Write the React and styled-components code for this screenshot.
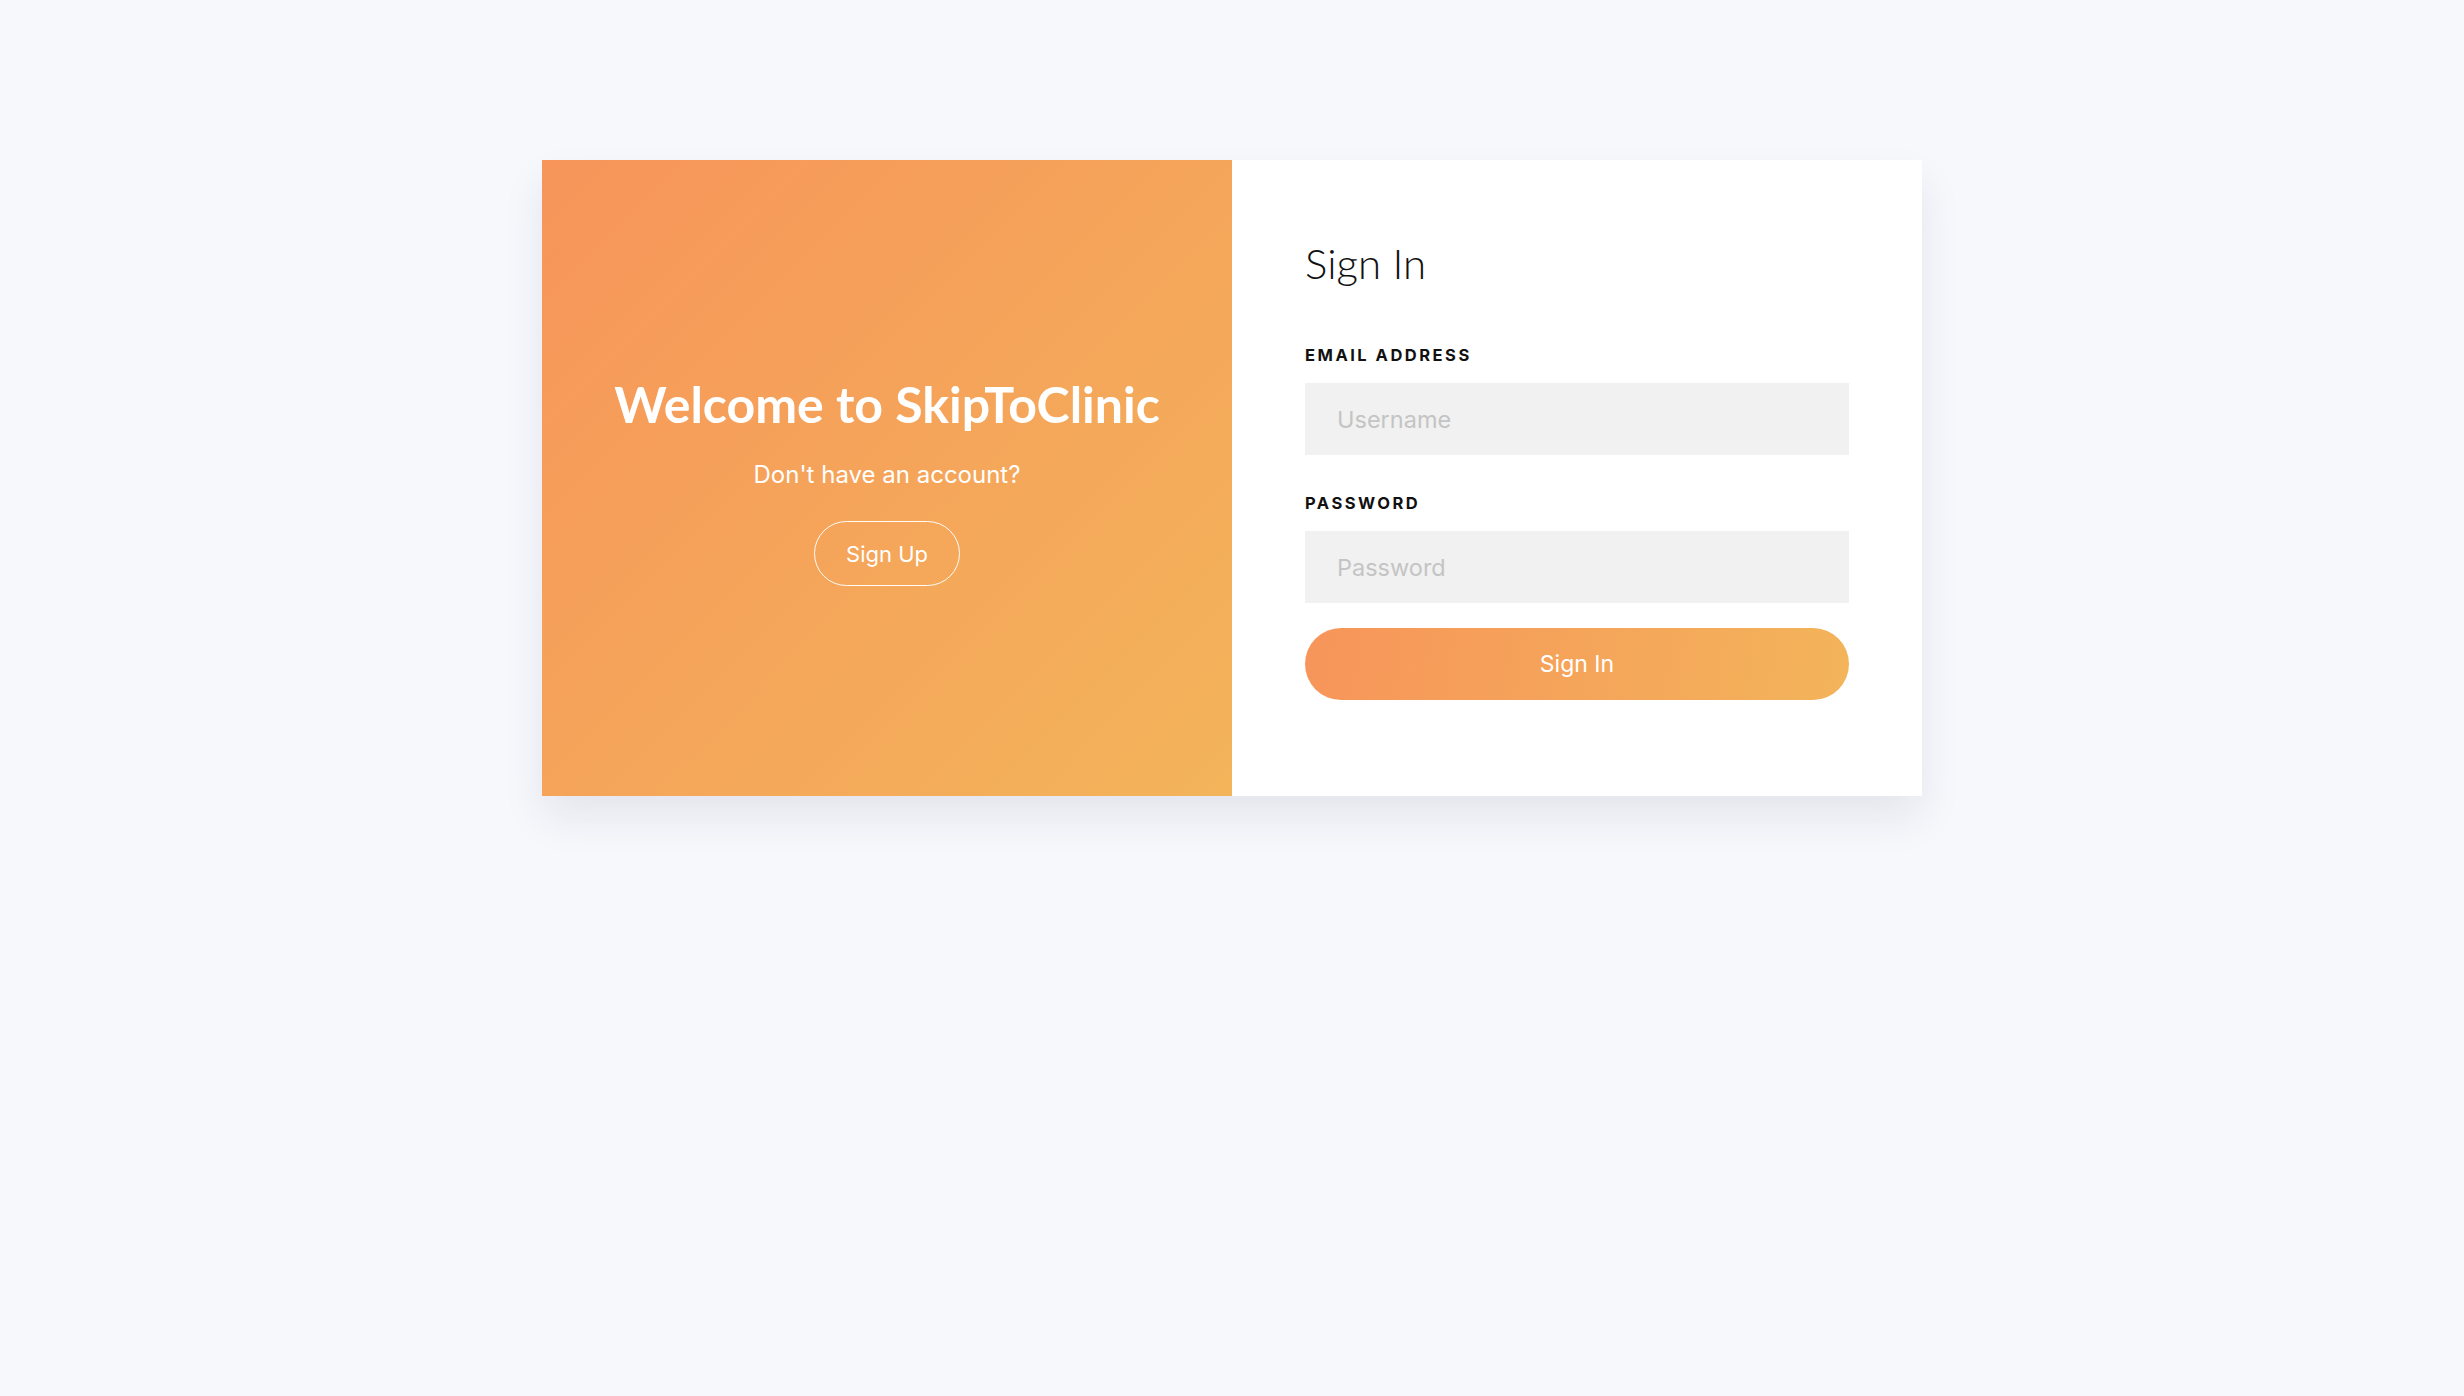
import styled, { createGlobalStyle } from "styled-components";

const GlobalStyle = createGlobalStyle`
    * {
        box-sizing: border-box;
    }
    body {
        margin: 0;
        background: #f7f8fc;
        font-family: Inter, "Noto Sans", sans-serif;
    }
`

const App = () => {
    return (
        <>
            <GlobalStyle />
            <Page>
                <Card>
                    <WelcomePanel>
                        <WelcomeTitle>Welcome to SkipToClinic</WelcomeTitle>
                        <WelcomeText>Don't have an account?</WelcomeText>
                        <OutlineButton type="button">Sign Up</OutlineButton>
                    </WelcomePanel>
                    <FormPanel>
                        <FormTitle>Sign In</FormTitle>
                        <Field>
                            <FieldLabel htmlFor="email">Email Address</FieldLabel>
                            <TextInput id="email" type="text" placeholder="Username" />
                        </Field>
                        <Field>
                            <FieldLabel htmlFor="password">Password</FieldLabel>
                            <TextInput id="password" type="password" placeholder="Password" />
                        </Field>
                        <SubmitButton type="button">Sign In</SubmitButton>
                    </FormPanel>
                </Card>
            </Page>
        </>
    );
};

export default App;

const Page = styled.div`
    min-height: 100vh;
    display: flex;
    justify-content: center;
    align-items: flex-start;
    padding-top: 160px;
`

const Card = styled.div`
    width: 1380px;
    min-height: 636px;
    display: grid;
    grid-template-columns: 1fr 1fr;
    background: #ffffff;
    box-shadow: 0 22px 40px rgba(20, 30, 60, 0.08);
`

const WelcomePanel = styled.div`
    display: flex;
    flex-direction: column;
    align-items: center;
    justify-content: center;
    padding-top: 4px;
    background: linear-gradient(135deg, #f7955a 0%, #f3b45a 100%);
    color: #ffffff;
`

const WelcomeTitle = styled.h1`
    margin: 0 0 26px;
    font-family: Lato, "Liberation Sans", sans-serif;
    font-size: 50px;
    font-weight: 700;
    line-height: 1.2;
`

const WelcomeText = styled.p`
    margin: 0 0 32px;
    font-size: 24px;
    line-height: 1.21;
`

const OutlineButton = styled.button`
    height: 65px;
    padding: 0 31px;
    border: 1px solid rgba(255, 255, 255, 0.95);
    border-radius: 33px;
    background: transparent;
    color: #ffffff;
    font-family: Inter, "Noto Sans", sans-serif;
    font-size: 22px;
    cursor: pointer;
`

const FormPanel = styled.div`
    display: flex;
    flex-direction: column;
    padding: 79px 73px 96px;
`

const FormTitle = styled.h2`
    margin: 0 0 58px;
    font-family: Lato, "Liberation Sans", sans-serif;
    font-size: 42px;
    font-weight: 300;
    line-height: 48px;
    color: #111111;
`

const Field = styled.div`
    display: flex;
    flex-direction: column;
    margin-bottom: 38px;

    &:last-of-type {
        margin-bottom: 25px;
    }
`

const FieldLabel = styled.label`
    margin-bottom: 18px;
    font-size: 16.5px;
    font-weight: 700;
    line-height: 20px;
    letter-spacing: 2.5px;
    text-transform: uppercase;
    color: #111111;
`

const TextInput = styled.input`
    height: 72px;
    padding: 0 32px;
    border: none;
    outline: none;
    background: #f1f1f1;
    font-family: Inter, "Noto Sans", sans-serif;
    font-size: 23.5px;
    color: #333333;

    &::placeholder {
        color: #c4c4c4;
    }
`

const SubmitButton = styled.button`
    height: 72px;
    border: none;
    border-radius: 36px;
    background: linear-gradient(100deg, #f7955a 0%, #f3b45a 100%);
    color: #ffffff;
    font-family: Inter, "Noto Sans", sans-serif;
    font-size: 23px;
    cursor: pointer;
`
